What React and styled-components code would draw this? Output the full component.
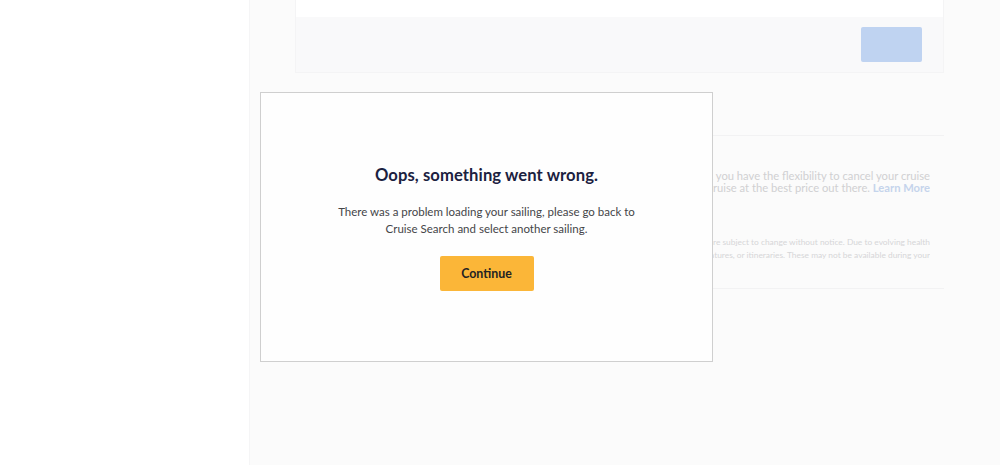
import React from "react";
import styled, { createGlobalStyle } from "styled-components";

const Global = createGlobalStyle`
  html, body { margin: 0; padding: 0; background: #ffffff; }
  body { font-family: Lato, "Open Sans", "Liberation Sans", sans-serif; }
  * { box-sizing: border-box; }
`;

const Page = styled.div`
  position: relative;
  display: flex;
  width: 1000px;
  height: 465px;
  overflow: hidden;
`;

const Sidebar = styled.aside`
  width: 250px;
  flex: none;
  background: #ffffff;
  border-right: 1px solid #f5f5f6;
`;

const Main = styled.main`
  flex: 1;
  min-width: 0;
  background: #fbfbfb;
  padding: 0 56px 0 45px;
  display: flex;
  flex-direction: column;
`;

const Card = styled.section`
  display: flex;
  flex-direction: column;
  border: 1px solid #f4f4f5;
  border-top: none;
  background: #f9f9fa;
`;

const CardTop = styled.div`
  height: 17px;
  background: #ffffff;
`;

const CardFooter = styled.div`
  height: 55px;
  display: flex;
  justify-content: flex-end;
  align-items: flex-start;
  padding: 10px 21px 0 0;
`;

const GhostButton = styled.div`
  width: 61px;
  height: 35px;
  border-radius: 2px;
  background: #bfd3f1;
`;

const Section = styled.section`
  margin-top: 62px;
  min-width: 0;
  border-top: 1px solid #f2f2f3;
  border-bottom: 1px solid #f2f2f3;
  height: 154px;
  display: flex;
  flex-direction: column;
  padding: 34px 14px 0 0;
`;

const TextClip = styled.div`
  margin-left: 418px;
  min-width: 0;
  overflow: hidden;
  display: flex;
  flex-direction: column;
`;

const Line = styled.div`
  display: flex;
  justify-content: flex-end;
  min-width: 0;
  white-space: nowrap;
  font-size: ${(p) => (p.small ? "8.4px" : "11.2px")};
  line-height: ${(p) => (p.small ? "13px" : "11.5px")};
  color: ${(p) => (p.small ? "#d6d6d8" : "#d0d0d2")};
  margin-top: ${(p) => p.gap || 0}px;
  & > span { flex: none; }
`;

const Link = styled.span`
  color: #c5d4ec;
  font-weight: 700;
`;

const Modal = styled.div`
  position: absolute;
  left: 260px;
  top: 92px;
  width: 453px;
  height: 270px;
  border: 1px solid #cfcfcf;
  background: #fefefe;
  display: flex;
  flex-direction: column;
  align-items: center;
  padding-top: 72px;
`;

const Title = styled.h2`
  margin: 0;
  font-size: 16.6px;
  font-weight: 700;
  color: #1b2140;
  line-height: 20px;
  letter-spacing: 0.1px;
`;

const Body = styled.p`
  margin: 18px 0 0;
  text-align: center;
  font-size: 11.5px;
  line-height: 17px;
  color: #444548;
`;

const Continue = styled.button`
  margin-top: 19px;
  width: 94px;
  height: 35px;
  border: none;
  border-radius: 2px;
  background: #fbb638;
  color: #232323;
  font-family: inherit;
  font-size: 12.4px;
  font-weight: 700;
  cursor: pointer;
`;

export default function App() {
  return (
    <>
      <Global />
      <Page>
        <Sidebar />
        <Main>
          <Card>
            <CardTop />
            <CardFooter>
              <GhostButton />
            </CardFooter>
          </Card>
          <Section>
            <TextClip>
              <Line><span>With our flexible cancellation policy, you have the flexibility to cancel your cruise</span></Line>
              <Line><span>and rebook another cruise at the best price out there. <Link>Learn More</Link></span></Line>
              <Line small gap={43}><span>All prices, fees, and itineraries are subject to change without notice. Due to evolving health</span></Line>
              <Line small><span>protocols, some amenities, venues, features, or itineraries. These may not be available during your</span></Line>
            </TextClip>
          </Section>
        </Main>
        <Modal role="dialog">
          <Title>Oops, something went wrong.</Title>
          <Body>
            There was a problem loading your sailing, please go back to
            <br />
            Cruise Search and select another sailing.
          </Body>
          <Continue>Continue</Continue>
        </Modal>
      </Page>
    </>
  );
}
